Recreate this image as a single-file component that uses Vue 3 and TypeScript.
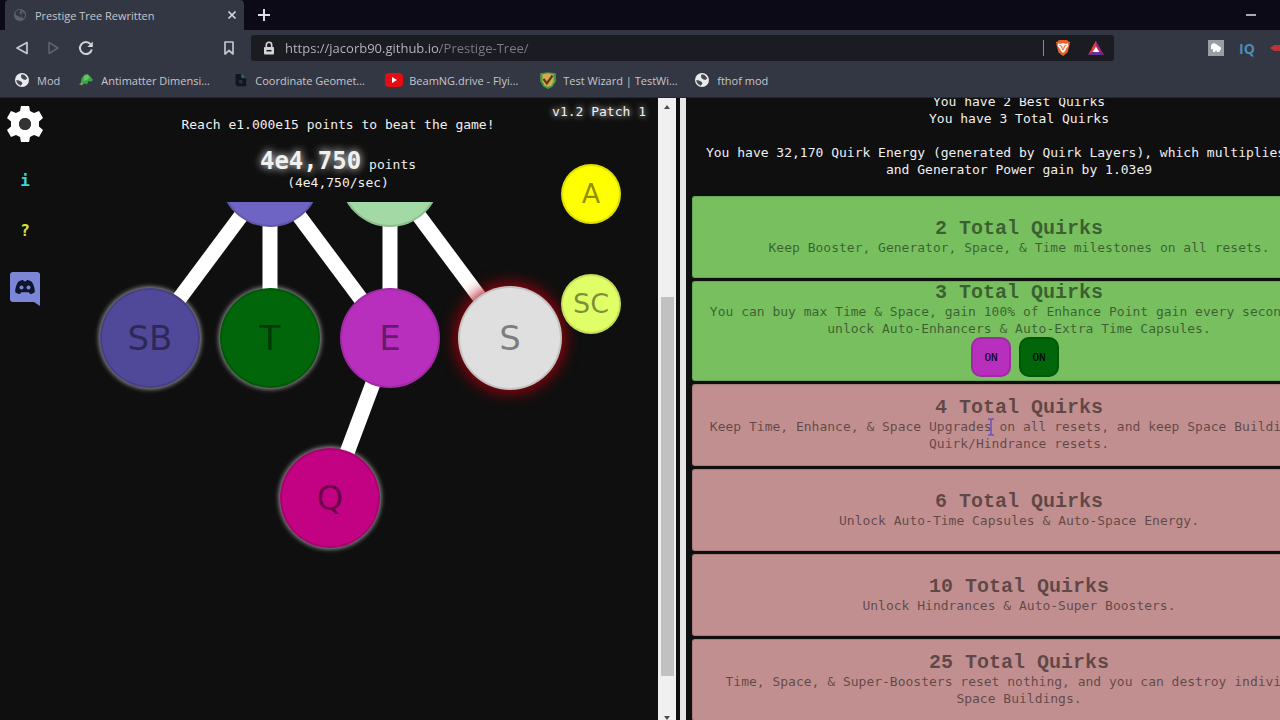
<script setup lang="ts">
import { ref } from 'vue'

interface Bookmark { label: string; icon: string; long: boolean }
interface TreeNode { id: string; x: number; y: number; kind: string }
interface Milestone { title: string; lines: string[]; done: boolean; toggles: string[] }

const address = ref('https://jacorb90.github.io/Prestige-Tree/')

const bookmarks: Bookmark[] = [
  { label: 'Mod', icon: 'globe', long: false },
  { label: 'Antimatter Dimensi…', icon: 'leaf', long: true },
  { label: 'Coordinate Geomet…', icon: 'page', long: true },
  { label: 'BeamNG.drive - Flyi…', icon: 'video', long: true },
  { label: 'Test Wizard | TestWi…', icon: 'shield', long: true },
  { label: 'fthof mod', icon: 'globe', long: false },
]

const nodes: TreeNode[] = [
  { id: '', x: 270, y: 79, kind: 'booster' },
  { id: '', x: 390, y: 79, kind: 'generator' },
  { id: 'SB', x: 150, y: 240, kind: 'super glow' },
  { id: 'T', x: 270, y: 240, kind: 'time glow' },
  { id: 'E', x: 390, y: 240, kind: 'enhance' },
  { id: 'S', x: 510, y: 240, kind: 'space' },
  { id: 'Q', x: 330, y: 400, kind: 'quirk glow' },
  { id: 'A', x: 591, y: 96, kind: 'small achievements' },
  { id: 'SC', x: 591, y: 206, kind: 'small softcaps' },
]

const links: number[][] = [
  [270, 79, 150, 240],
  [270, 79, 270, 240],
  [270, 79, 390, 240],
  [390, 79, 390, 240],
  [390, 79, 510, 240],
  [390, 240, 330, 400],
]

const milestones: Milestone[] = [
  { title: '2 Total Quirks', lines: ['Keep Booster, Generator, Space, & Time milestones on all resets.'], done: true, toggles: [] },
  {
    title: '3 Total Quirks',
    lines: [
      'You can buy max Time & Space, gain 100% of Enhance Point gain every second, and',
      'unlock Auto-Enhancers & Auto-Extra Time Capsules.',
    ],
    done: true,
    toggles: ['enhance', 'time'],
  },
  {
    title: '4 Total Quirks',
    lines: [
      'Keep Time, Enhance, & Space Upgrades on all resets, and keep Space Buildings on',
      'Quirk/Hindrance resets.',
    ],
    done: false,
    toggles: [],
  },
  { title: '6 Total Quirks', lines: ['Unlock Auto-Time Capsules & Auto-Space Energy.'], done: false, toggles: [] },
  { title: '10 Total Quirks', lines: ['Unlock Hindrances & Auto-Super Boosters.'], done: false, toggles: [] },
  {
    title: '25 Total Quirks',
    lines: [
      'Time, Space, & Super-Boosters reset nothing, and you can destroy individual',
      'Space Buildings.',
    ],
    done: false,
    toggles: [],
  },
]
</script>

<template>
  <div class="window">
    <header class="chrome">
      <div class="tabs">
        <div class="tab">
          <svg class="tab-icon" viewBox="0 0 16 16" width="14" height="14">
            <circle cx="8" cy="8" r="7" fill="#5d606c" />
            <path d="M3 5c2-3 5-3 6-2L7 6l3 2-1 3-3-2-3-1z M10 4l4 3-1 4-2 1-1-3z" fill="#343743" />
          </svg>
          <span class="tab-title">Prestige Tree Rewritten</span>
          <button class="plain" aria-label="Close tab">
            <svg viewBox="0 0 10 10" width="10" height="10"><path d="M1.5 1.5l7 7M8.5 1.5l-7 7" stroke="#d8d9de" stroke-width="1.7" /></svg>
          </button>
        </div>
        <button class="plain new-tab" aria-label="New tab">
          <svg viewBox="0 0 12 12" width="12" height="12"><path d="M6 0v12M0 6h12" stroke="#dcdce2" stroke-width="2" /></svg>
        </button>
        <button class="plain minimize" aria-label="Minimize">
          <svg viewBox="0 0 12 12" width="12" height="12"><path d="M1 6h10" stroke="#a9a9b3" stroke-width="2" /></svg>
        </button>
      </div>

      <div class="toolbar">
        <nav class="history">
          <button class="plain" aria-label="Back">
            <svg viewBox="0 0 16 16" width="16" height="16"><path d="M13 2.500v11L3 8z" fill="none" stroke="#c9cad0" stroke-width="1.700" stroke-linejoin="round" /></svg>
          </button>
          <button class="plain" aria-label="Forward">
            <svg viewBox="0 0 16 16" width="16" height="16"><path d="M3 2.500v11L12 8z" fill="none" stroke="#60636f" stroke-width="1.500" stroke-linejoin="round" /></svg>
          </button>
          <button class="plain" aria-label="Reload">
            <svg viewBox="0 0 16 16" width="16" height="16">
              <path d="M12.600 4.200A6 6 0 1 0 13.800 9.500" fill="none" stroke="#d2d3d9" stroke-width="2" />
              <path d="M14.800 1.500v5.500H9.300z" fill="#d2d3d9" />
            </svg>
          </button>
        </nav>
        <button class="plain mark" aria-label="Bookmark this page">
          <svg viewBox="0 0 12 16" width="12" height="16"><path d="M2 2h8v12l-4-3.500L2 14z" fill="none" stroke="#c3c4cb" stroke-width="1.700" stroke-linejoin="round" /></svg>
        </button>
        <div class="address">
          <svg viewBox="0 0 12 14" width="12" height="14">
            <rect x="1" y="6" width="10" height="7.500" rx="1" fill="#d4d4d8" />
            <path d="M3.300 6V4a2.700 2.700 0 0 1 5.400 0v2" fill="none" stroke="#d4d4d8" stroke-width="1.600" />
            <path d="M3.500 9.700h5" stroke="#1b1c22" stroke-width="1.500" />
          </svg>
          <input v-model="address" class="url" type="text" aria-label="Address" spellcheck="false" />
          <span class="rule"></span>
          <button class="plain" aria-label="Shields">
            <svg viewBox="0 0 16 18" width="16" height="18">
              <path d="M4 1h8l1.500 1.500L15 3l-.5 3-2 7.500L8 17l-4.500-3.500L1.500 6 1 3l1.500-.5z" fill="#e8602c" />
              <path d="M3 4.500l3 .2 2-.7 2 .7 3-.2.3 2.500-2.300 3-.8 2L8 14l-2.200-2-.8-2-2.300-3z" fill="#fff2e8" />
              <path d="M4.500 6.500l2 .5.800 2.500L8 11l.7-1.500.800-2.500 2-.5" fill="none" stroke="#e8602c" stroke-width="1" />
            </svg>
          </button>
          <button class="plain rewards" aria-label="Rewards">
            <svg viewBox="0 0 18 16" width="18" height="16">
              <path d="M9 1L5 8 9 7z" fill="#ef4a2c" /><path d="M9 1l-8 14 8-5z" fill="#e33b35" />
              <path d="M9 1l8 14-8-5z" fill="#a3246f" /><path d="M1 15h16l-8-5z" fill="#62329a" />
              <path d="M9 6.500l3.300 5.500H5.700z" fill="#fff" />
            </svg>
          </button>
        </div>
        <div class="extensions">
          <button class="plain" aria-label="Extension">
            <svg viewBox="0 0 16 16" width="16" height="16">
              <rect width="16" height="16" fill="#9a9ca6" />
              <path d="M3 6a3 3 0 0 1 5-2l5 3.500V9l-2 3H9l-1-2-1 2H5V9.500L3 9z" fill="#fff" />
            </svg>
          </button>
          <button class="plain iq" aria-label="IQ extension">IQ</button>
          <button class="plain" aria-label="More extensions">
            <svg viewBox="0 0 16 16" width="16" height="16"><path d="M0 8l4-3h12v6H4z" fill="#b93636" /></svg>
          </button>
        </div>
      </div>

      <nav class="bookmarks">
        <a v-for="b in bookmarks" :key="b.label" href="#" class="bookmark">
          <svg v-if="b.icon === 'globe'" viewBox="0 0 16 16" width="14" height="14">
            <circle cx="8" cy="8" r="8" fill="#e9eaee" />
            <path d="M7 2c3-1 5 1 7 4l-2 2-3-1-2-2zM1.500 8l3 .5 3 1.500 1 2-2 2.500C3 13 1.500 11 1.500 8z" fill="#444754" />
          </svg>
          <svg v-else-if="b.icon === 'leaf'" viewBox="0 0 16 16" width="14" height="14">
            <path d="M3 6l3-4 4-1 3 3 3 4-2 2-3-1-2 4-3-1-3 2-1-3z" fill="#39a548" />
            <path d="M6 3l4-1 2 3-3 3-4 1z" fill="#62c95e" /><path d="M0 13l4-3v4z" fill="#7aa35c" />
          </svg>
          <svg v-else-if="b.icon === 'page'" viewBox="0 0 16 16" width="14" height="14">
            <path d="M3 1h6v5h6v9H5l-2-2z" fill="#11151d" /><path d="M10 1l4 4h-4z" fill="#2d6a91" />
            <path d="M7 8h4v4H7z" fill="#28303d" />
          </svg>
          <svg v-else-if="b.icon === 'video'" viewBox="0 0 18 14" width="18" height="14" class="wide">
            <rect width="18" height="14" rx="4" fill="#e60d12" /><path d="M7 4l5 3-5 3z" fill="#fff" />
          </svg>
          <svg v-else viewBox="0 0 16 16" width="18" height="18" class="wide">
            <path d="M1 2l7-1 7 1v7l-3 5-4 2-4-2-3-5z" fill="#3f9a45" />
            <path d="M3 3l5-1 5 1v6l-2 4-3 1-3-1-2-4z" fill="#d6a94a" />
            <path d="M4 7l3 4 5-7" fill="none" stroke="#5b3c22" stroke-width="2" />
          </svg>
          <span :class="{ long: b.long }">{{ b.label }}</span>
        </a>
      </nav>
    </header>

    <main class="game">
      <section class="left">
        <div class="tree">
          <div class="canvas">
            <svg class="links" aria-hidden="true">
              <line v-for="(l, i) in links" :key="i" :x1="l[0]" :y1="l[1]" :x2="l[2]" :y2="l[3]" />
            </svg>
            <button
              v-for="n in nodes"
              :key="n.kind"
              class="node"
              :class="n.kind"
              :style="{ left: n.x + 'px', top: n.y + 'px' }"
            >{{ n.id }}</button>
          </div>
          <div class="mask"></div>
        </div>
        <div class="scrollbar" aria-hidden="true">
          <svg viewBox="0 0 18 18" width="18" height="18"><path d="M6 11l3-4 3 4z" fill="#4d4d4d" /></svg>
          <div class="track"><div class="thumb"></div></div>
          <svg viewBox="0 0 18 18" width="18" height="18"><path d="M6 14l3 4 3-4z" fill="#4d4d4d" /></svg>
        </div>

        <div class="status">
          <p>Reach e1.000e15 points to beat the game!</p>
          <p class="points"><strong>4e4,750</strong><span>points</span></p>
          <p>(4e4,750/sec)</p>
        </div>
        <div class="version">v1.2 Patch 1</div>

        <nav class="side">
          <button class="plain" aria-label="Options">
            <svg viewBox="0 0 36 36" width="36" height="36">
              <path fill="#fff" fill-rule="evenodd" d="M14 0h8l1 5 4 2 5-2 4 7-4 3.500v5l4 3.500-4 7-5-2-4 2-1 5h-8l-1-5-4-2-5 2-4-7 4-3.500v-5L0 12l4-7 5 2 4-2zM18 12a6 6 0 1 0 0 12 6 6 0 0 0 0-12z" />
              <circle cx="18" cy="18" r="6" fill="#333" />
            </svg>
          </button>
          <button class="plain info">i</button>
          <button class="plain help">?</button>
          <a href="#" aria-label="Discord">
            <svg viewBox="0 0 30 34" width="30" height="34">
              <path d="M3 0h24a3 3 0 0 1 3 3v31l-6-4H3a3 3 0 0 1-3-3V3a3 3 0 0 1 3-3z" fill="#7b87d6" />
              <path d="M8 10c2-1.500 4-2 5-2l1 1.200h2L17 8c1 0 3 .5 5 2 2 3.500 3 7 2.800 10-1.500 1.500-3.300 2-4.800 2l-1.200-1.800h-7.600L10 22c-1.500 0-3.300-.5-4.800-2C5 17 6 13.500 8 10z" fill="#11152c" />
              <circle cx="11.500" cy="15.500" r="2" fill="#7b87d6" /><circle cx="18.500" cy="15.500" r="2" fill="#7b87d6" />
            </svg>
          </a>
        </nav>
      </section>

      <div class="divider"></div>

      <section class="right">
        <div class="layer">
          <div class="summary">
            <p>You have 2 Best Quirks</p>
            <p>You have 3 Total Quirks</p>
            <p class="energy">You have 32,170 Quirk Energy (generated by Quirk Layers), which multiplies Point</p>
            <p>and Generator Power gain by 1.03e9</p>
          </div>
          <div class="milestones">
            <article v-for="m in milestones" :key="m.title" class="milestone" :class="{ done: m.done }">
              <h3>{{ m.title }}</h3>
              <p v-for="t in m.lines" :key="t">{{ t }}</p>
              <div v-if="m.toggles.length" class="toggles">
                <button v-for="k in m.toggles" :key="k" class="toggle" :class="k">ON</button>
              </div>
            </article>
          </div>
        </div>
        <svg class="caret" viewBox="0 0 8 18" width="8" height="18">
          <path d="M1 1h2l1 1 1-1h2M4 2v14M1 17h2l1-1 1 1h2" fill="none" stroke="#6b52c4" stroke-width="1.500" />
        </svg>
      </section>
    </main>
  </div>
</template>

<style>
html,
body {
  margin: 0;
  overflow: hidden;
  background: #0f0f0f;
}
</style>

<style scoped>
.window {
  display: flex;
  flex-direction: column;
  height: 100vh;
  overflow: hidden;
  font-family: "DejaVu Sans Mono", monospace;
  font-size: 13px;
  line-height: 17px;
  color: #f0f0f0;
}
p,
h3 {
  margin: 0;
  font-weight: 400;
  white-space: nowrap;
}
svg {
  display: block;
  flex: none;
}
.plain {
  display: block;
  padding: 0;
  border: 0;
  background: none;
  color: inherit;
  font: inherit;
}

/* Browser frame */
.chrome {
  flex: none;
  background: #333643;
  font-family: "Open Sans", "Noto Sans", sans-serif;
  font-size: 11px;
  color: #c6c7cd;
  border-bottom: 1px solid #262733;
}
.tabs {
  display: flex;
  align-items: center;
  height: 30px;
  padding-left: 5px;
  background: #0c0a16;
}
.tab {
  display: flex;
  align-items: center;
  gap: 8px;
  box-sizing: border-box;
  width: 239px;
  height: 30px;
  padding: 0 7px 0 8px;
  border-radius: 4px 4px 0 0;
  background: #333643;
}
.tab-title {
  flex: 1;
}
.new-tab {
  margin-left: 14px;
}
.minimize {
  margin-left: auto;
  margin-right: 23px;
}
.toolbar {
  display: flex;
  align-items: center;
  height: 36px;
  padding-left: 14px;
}
.history {
  display: flex;
  gap: 16px;
}
.mark {
  margin-left: auto;
  margin-right: 16px;
}
.address {
  display: flex;
  align-items: center;
  flex: 0 0 calc(100% - 403px);
  box-sizing: border-box;
  height: 26px;
  padding: 0 9px 0 12px;
  border-radius: 3px;
  background: #1b1c22;
}
.url {
  flex: 1;
  min-width: 0;
  margin-left: 10px;
  padding: 0;
  border: 0;
  outline: 0;
  font-family: "Open Sans", "Noto Sans", sans-serif;
  font-size: 13px;
  line-height: 20px;
  color: transparent;
  background: linear-gradient(90deg, #b9bac0 0 155px, #7b7c84 155px);
  -webkit-background-clip: text;
  background-clip: text;
}
.rule {
  width: 1px;
  height: 16px;
  margin-right: 11px;
  background: #8a8b92;
}
.rewards {
  margin-left: 16px;
}
.extensions {
  display: flex;
  align-items: center;
  gap: 15px;
  width: 72px;
  margin-left: 94px;
  overflow: hidden;
}
.iq {
  font-size: 14px;
  font-weight: 700;
  color: #4c8dbb;
}
.bookmarks {
  display: flex;
  align-items: center;
  gap: 19px;
  height: 31px;
  padding: 0 15px 3px;
  box-sizing: border-box;
}
.bookmark {
  display: flex;
  align-items: center;
  gap: 8px;
  color: inherit;
  text-decoration: none;
  white-space: nowrap;
}
.wide {
  margin: 0 -2px;
}
.long {
  width: 113px;
}

/* Game */
.game {
  display: flex;
  flex: 1;
  min-height: 0;
  background: #0f0f0f;
}
.left {
  position: relative;
  display: flex;
  flex: 0 0 calc(50% + 36px);
  min-width: 0;
}
.tree {
  position: relative;
  flex: 1;
  min-width: 0;
  overflow: hidden;
}
.canvas {
  position: relative;
  height: 100%;
}
.links {
  position: absolute;
  inset: 0;
  width: 100%;
  height: 100%;
}
.links line {
  stroke: #fff;
  stroke-width: 15;
}
.node {
  position: absolute;
  width: 100px;
  height: 100px;
  padding: 0;
  transform: translate(-50%, -50%);
  border: 2px solid rgba(0, 0, 0, 0.125);
  border-radius: 50%;
  color: rgba(0, 0, 0, 0.45);
  font-family: "DejaVu Sans", sans-serif;
  font-size: 34px;
  line-height: 40px;
}
.booster { background: #6e64c4; }
.generator { background: #a3d9a5; }
.super { background: #504899; }
.time { background: #006609; }
.enhance { background: #b82fbd; }
.quirk { background: #c20282; }
.glow {
  box-shadow: 0 0 5px 1px rgba(255, 255, 255, 0.6);
}
.space {
  width: 104px;
  height: 104px;
  background: #dfdfdf;
  box-shadow: 0 0 16px 2px #a8000d;
}
.small {
  width: 60px;
  height: 60px;
  font-size: 27px;
}
.achievements { background: #ffff00; }
.softcaps { background: #e0ff66; }
.mask {
  position: absolute;
  top: 0;
  left: 100px;
  right: 100px;
  height: 104px;
  background: #0f0f0f;
}
.status {
  position: absolute;
  top: 18px;
  left: 0;
  right: 0;
  text-align: center;
  pointer-events: none;
}
.points {
  display: flex;
  align-items: baseline;
  justify-content: center;
  gap: 8px;
  height: 26px;
  margin-top: 15px;
}
.points strong {
  font-size: 24px;
  line-height: 26px;
  text-shadow: 0 0 8px #fff;
}
.version {
  position: absolute;
  top: 5px;
  right: 30px;
  text-shadow: 0 0 6px #fff;
}
.side {
  position: absolute;
  top: 8px;
  left: 8px;
  display: flex;
  flex-direction: column;
  align-items: center;
  width: 34px;
  font-size: 16px;
  font-weight: 700;
}
.info {
  margin-top: 30px;
  color: #35d7dd;
}
.help {
  margin: 33px 0;
  color: #d5e43c;
}
.scrollbar {
  display: flex;
  flex-direction: column;
  flex: none;
  width: 18px;
  background: #f0f0f0;
}
.track {
  flex: 1;
  padding: 181px 2px 26px 3px;
}
.thumb {
  height: 100%;
  background: #c1c1c1;
}
.divider {
  flex: none;
  width: 6px;
  margin: 0 6px 0 4px;
  background: #e6e6e6;
}
.right {
  position: relative;
  flex: 1;
  min-width: 0;
  overflow: hidden;
}
.layer {
  width: calc(100% + 66px);
  margin-top: -5px;
  text-align: center;
}
.energy {
  margin-top: 17px;
}
.milestones {
  display: flex;
  flex-direction: column;
  gap: 3px;
  margin-top: 18px;
}
.milestone {
  display: flex;
  flex-direction: column;
  justify-content: center;
  box-sizing: border-box;
  min-height: 82px;
  padding: 2px 0;
  border-radius: 3px;
  background: #c18f8f;
  box-shadow: inset 0 0 0 1px rgba(0, 0, 0, 0.125);
  color: rgba(0, 0, 0, 0.5);
}
.done {
  background: #77bf5f;
}
.milestone h3 {
  font-family: "Liberation Mono", monospace;
  font-size: 20px;
  font-weight: 700;
  line-height: 20px;
}
.toggles {
  display: flex;
  justify-content: center;
  padding-bottom: 2px;
}
.toggle {
  width: 40px;
  height: 40px;
  margin-right: 8px;
  padding: 0;
  border: 2px solid rgba(0, 0, 0, 0.125);
  border-radius: 10px;
  color: #000;
  font-family: "DejaVu Sans Mono", monospace;
  font-size: 11px;
}
.caret {
  position: absolute;
  top: 320px;
  left: 295px;
}
</style>
